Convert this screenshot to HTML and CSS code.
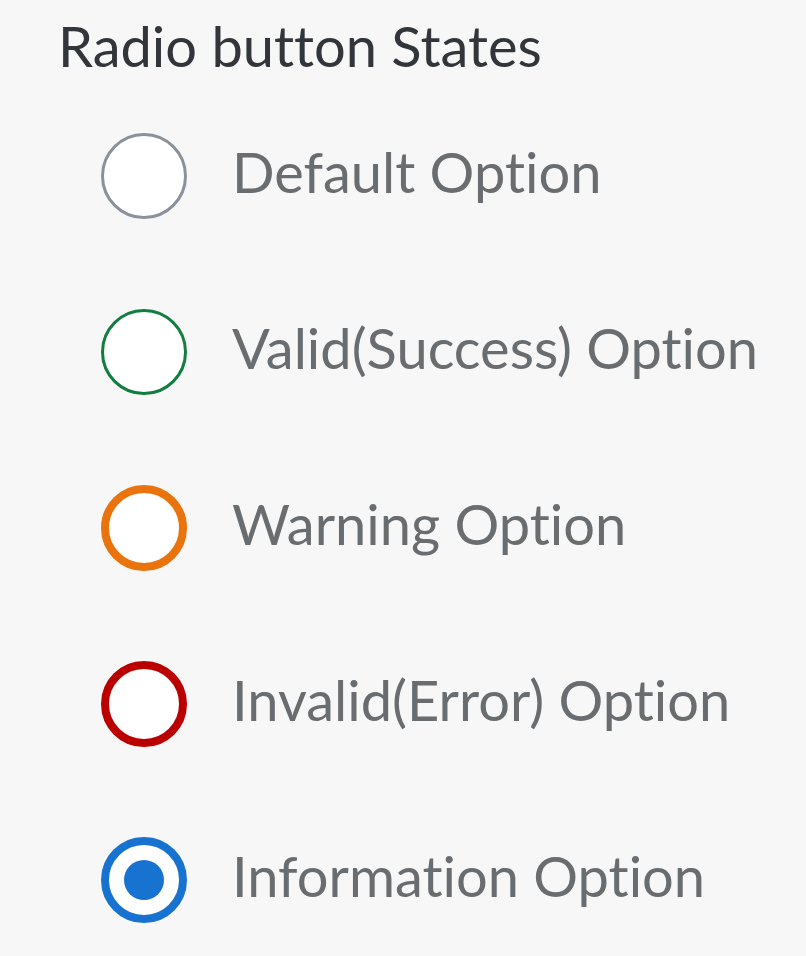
FILE: index.html
```html
<!DOCTYPE html>
<html lang="en">
<head>
<meta charset="utf-8">
<title>Radio button States</title>
<link rel="stylesheet" href="styles.css">
</head>
<body>
<div class="page">
  <h1 class="title">Radio button States</h1>
  <div class="group" role="radiogroup">
    <label class="row">
      <span class="radio radio-default"></span>
      <span class="label">Default Option</span>
    </label>
    <label class="row">
      <span class="radio radio-success"></span>
      <span class="label">Valid(Success) Option</span>
    </label>
    <label class="row">
      <span class="radio radio-warning"></span>
      <span class="label">Warning Option</span>
    </label>
    <label class="row">
      <span class="radio radio-error"></span>
      <span class="label">Invalid(Error) Option</span>
    </label>
    <label class="row">
      <span class="radio radio-info is-selected"></span>
      <span class="label">Information Option</span>
    </label>
  </div>
</div>
</body>
</html>
```
FILE: styles.css
```css
html, body {
  margin: 0;
  padding: 0;
  background: #f7f7f7;
}
body {
  font-family: Lato, "Open Sans", sans-serif;
  font-variant-ligatures: none;
  font-feature-settings: "liga" 0, "dlig" 0;
}
.page {
  width: 806px;
  height: 956px;
  box-sizing: border-box;
}
.title {
  margin: 0;
  height: 88px;
  box-sizing: border-box;
  padding: 14px 0 0 58px;
  font-size: 56px;
  line-height: 64px;
  font-weight: 400;
  color: #32363a;
}
.group {
  display: flex;
  flex-direction: column;
}
.row {
  height: 176px;
  display: flex;
  align-items: center;
  padding-left: 101px;
  gap: 45px;
}
.radio {
  width: 86px;
  height: 86px;
  box-sizing: border-box;
  border-radius: 50%;
  background: #ffffff;
  flex: none;
  display: flex;
  align-items: center;
  justify-content: center;
}
.radio-default { border: 3px solid #89919a; }
.radio-success { border: 3px solid #107e3e; }
.radio-warning { border: 8px solid #e9730c; }
.radio-error { border: 8px solid #bb0000; }
.radio-info { border: 8px solid #1873d0; }
.is-selected::after {
  content: "";
  width: 40px;
  height: 40px;
  border-radius: 50%;
  background: #1873d0;
}
.label {
  font-size: 56px;
  line-height: 64px;
  color: #6a6d70;
  margin-top: -8px;
}
```
